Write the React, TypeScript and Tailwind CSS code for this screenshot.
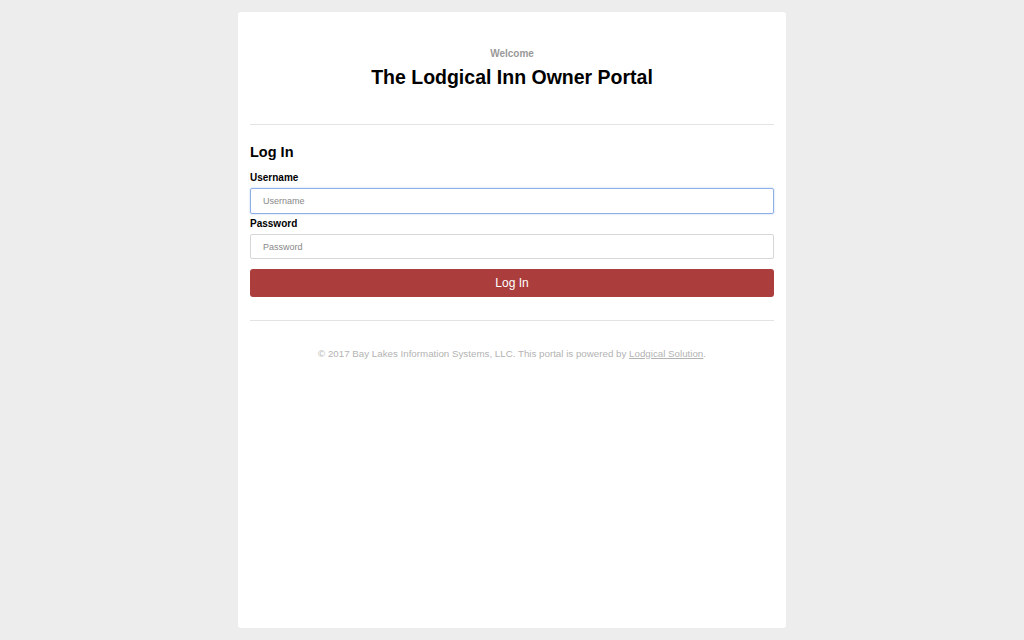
import { useState } from 'react';

export default function App() {
  const [username, setUsername] = useState('');
  const [password, setPassword] = useState('');

  return (
    <main className="min-h-screen w-full bg-[#ededed] flex justify-center py-3 font-['Liberation_Sans',Arial,sans-serif]">
      <div className="w-[548px] h-[616px] bg-white rounded-[3px] px-3">
        {/* Header */}
        <div className="pt-[36px] pb-[36px] text-center">
          <p className="text-[10px] font-bold text-[#999999] leading-[12px]">Welcome</p>
          <h1 className="mt-[6px] text-[19.5px] font-bold text-black leading-[22px]">The Lodgical Inn Owner Portal</h1>
        </div>

        <hr className="border-0 border-t border-[#e3e3e3]" />

        {/* Login form */}
        <form className="pt-[18px]" onSubmit={(e) => e.preventDefault()}>
          <h2 className="text-[14.5px] font-bold text-black leading-[18px]">Log In</h2>

          <label className="block mt-[11px] text-[10px] font-bold text-black leading-[12px]">Username</label>
          <input
            type="text"
            placeholder="Username"
            value={username}
            autoFocus
            onChange={(e) => setUsername(e.target.value)}
            className="mt-[4px] block w-full h-[26px] px-3 text-[9px] rounded-[2px] border border-[#8fb0e6] outline-none shadow-[0_0_2px_rgba(102,153,230,0.5)] placeholder:text-[#888888]"
          />

          <label className="block mt-[4px] text-[10px] font-bold text-black leading-[12px]">Password</label>
          <input
            type="password"
            placeholder="Password"
            value={password}
            onChange={(e) => setPassword(e.target.value)}
            className="mt-[4px] block w-full h-[25px] px-3 text-[9px] rounded-[2px] border border-[#d6d6d6] outline-none placeholder:text-[#888888]"
          />

          <button
            type="submit"
            className="mt-[10px] block w-full h-[28px] rounded-[3px] bg-[#ab3d3d] text-white text-[12px]"
          >
            Log In
          </button>
        </form>

        <hr className="mt-[23px] border-0 border-t border-[#e3e3e3]" />

        {/* Footer */}
        <p className="mt-[27px] text-center text-[9.75px] text-[#b3b3b3] leading-[12px]">
          © 2017 Bay Lakes Information Systems, LLC. This portal is powered by{' '}
          <a href="#" className="underline">Lodgical Solution</a>.
        </p>
      </div>
    </main>
  );
}
